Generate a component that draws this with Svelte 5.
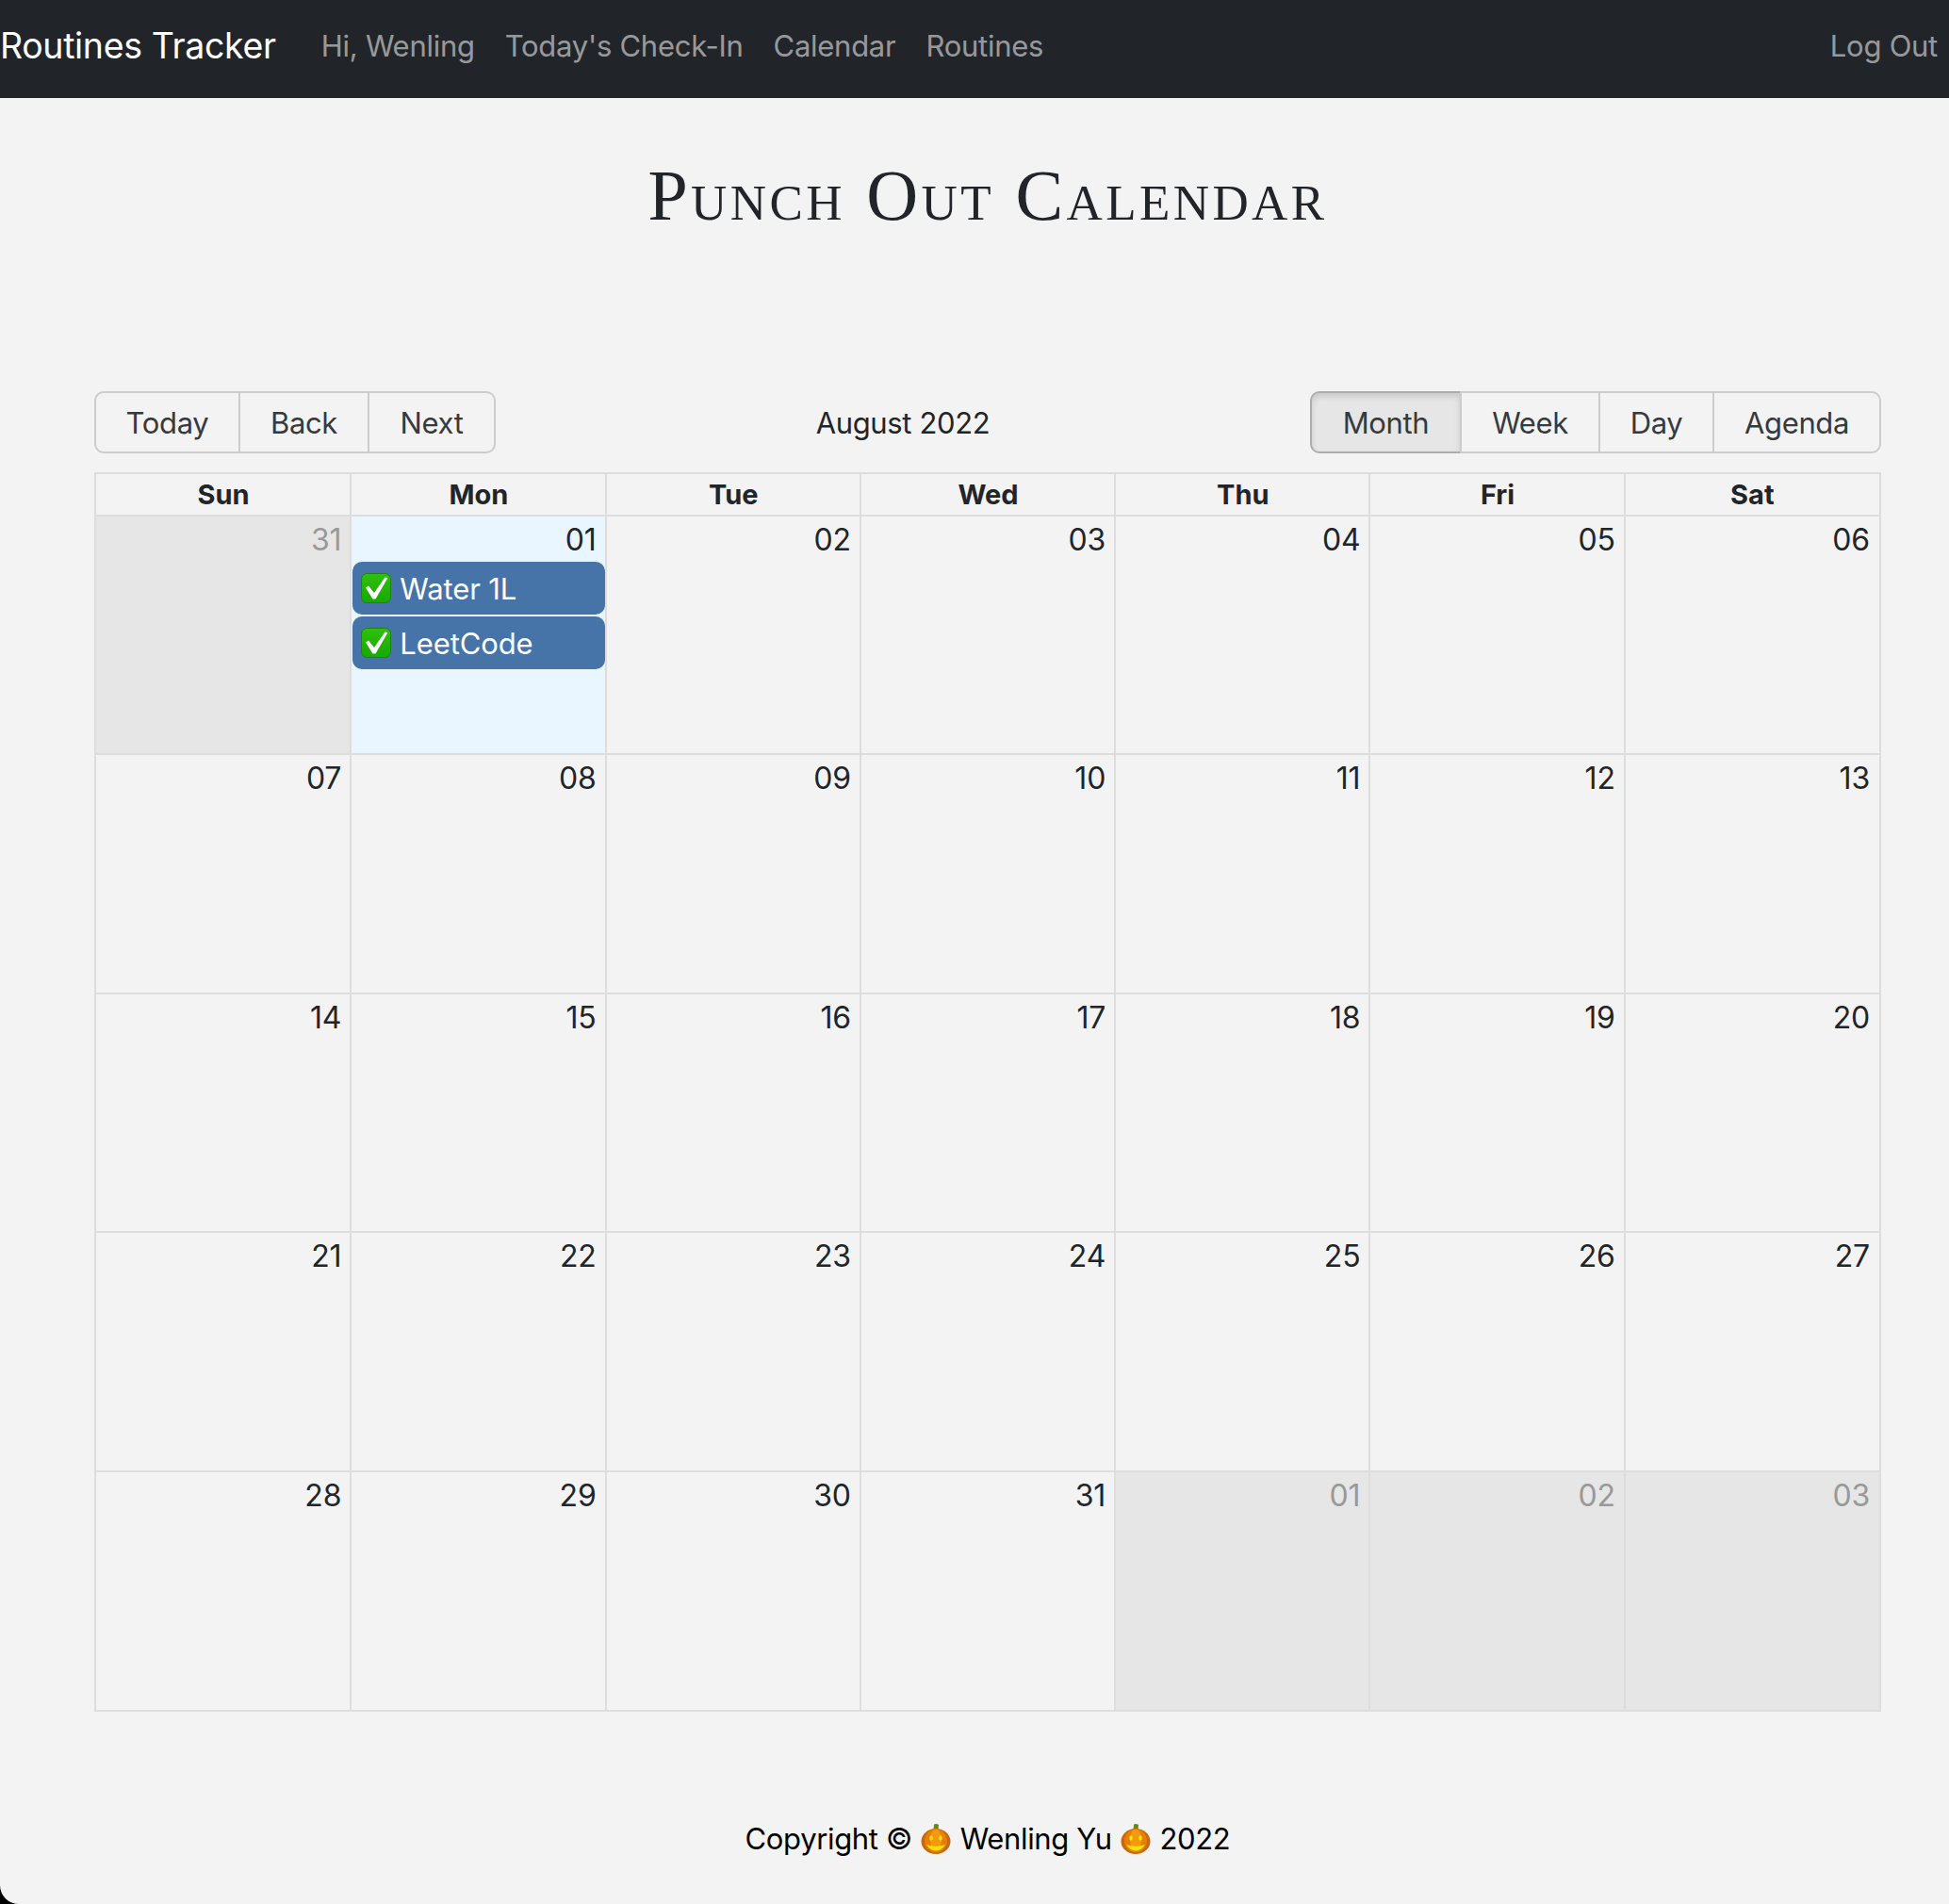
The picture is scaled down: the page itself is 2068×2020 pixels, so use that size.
<script>
  const dayNames = ['Sun', 'Mon', 'Tue', 'Wed', 'Thu', 'Fri', 'Sat']
  const pad = (n) => String(n).padStart(2, '0')

  // 5 weeks, starts on Jul 31
  const weeks = []
  for (let w = 0; w < 5; w++) {
    const days = []
    for (let d = 0; d < 7; d++) {
      const n = w * 7 + d
      let label, off = false
      if (n === 0) {
        label = '31'
        off = true
      } else if (n > 31) {
        label = pad(n - 31)
        off = true
      } else {
        label = pad(n)
      }
      days.push({ label, off, today: n === 1 })
    }
    weeks.push(days)
  }
  const events = ['Water 1L', 'LeetCode']
</script>

{#snippet check()}
  <svg class="check" viewBox="0 0 32 32" aria-hidden="true">
    <defs>
      <linearGradient id="chk" x1="0" y1="0" x2="0" y2="1">
        <stop offset="0" stop-color="#2fc10a" />
        <stop offset="1" stop-color="#18a800" />
      </linearGradient>
    </defs>
    <rect x="0.5" y="0.5" width="31" height="31" rx="6" fill="url(#chk)" stroke="#17870f" />
    <path d="M5 15.5 L8 13.5 L14 21 L25.5 4.5 L28.5 5 L15.5 27.5 L12.5 27.5 Z" fill="#fff" />
  </svg>
{/snippet}

{#snippet pumpkin()}
  <svg class="pumpkin" viewBox="0 0 32 32" aria-hidden="true">
    <path d="M13.5 6 L14 1 Q14 0 16 0 Q19 0 19 1.5 L18.5 6 Z" fill="#5f8f10" />
    <ellipse cx="16" cy="18.5" rx="15.5" ry="13.5" fill="#c9680a" />
    <ellipse cx="16" cy="18" rx="12" ry="12.5" fill="#e67f08" />
    <ellipse cx="16" cy="17" rx="6" ry="11.5" fill="#f19a10" />
    <ellipse cx="11" cy="15" rx="1.8" ry="2.8" fill="#fbe00a" />
    <ellipse cx="21" cy="15" rx="1.8" ry="2.8" fill="#fbe00a" />
    <path d="M6 22 Q16 25.5 26 22 Q22 28.5 16 28.5 Q10 28.5 6 22 Z" fill="#f6e00a" />
  </svg>
{/snippet}

<nav class="navbar">
  <a class="brand" href="#top">Routines Tracker</a>
  <a class="nav-link" href="#top">Hi, Wenling</a>
  <a class="nav-link" href="#top">Today's Check-In</a>
  <a class="nav-link" href="#top">Calendar</a>
  <a class="nav-link" href="#top">Routines</a>
  <a class="nav-link logout" href="#top">Log Out</a>
</nav>

<main>
  <h1>Punch Out Calendar</h1>

  <div class="toolbar">
    <div class="btn-group">
      <button class="w-today">Today</button>
      <button class="w-back">Back</button>
      <button class="w-next">Next</button>
    </div>
    <span class="label">August 2022</span>
    <div class="btn-group">
      <button class="active w-month">Month</button>
      <button class="w-week">Week</button>
      <button class="w-day">Day</button>
      <button class="w-agenda">Agenda</button>
    </div>
  </div>

  <div class="calendar">
    <div class="head">
      {#each dayNames as name}
        <div class="head-cell">{name}</div>
      {/each}
    </div>
    {#each weeks as week}
      <div class="week">
        {#each week as day}
          <div class="day" class:off={day.off} class:today={day.today}>
            <div class="date">{day.label}</div>
            {#if day.today}
              {#each events as ev}
                <div class="event">{@render check()}<span>{ev}</span></div>
              {/each}
            {/if}
          </div>
        {/each}
      </div>
    {/each}
  </div>

  <footer>
    Copyright © {@render pumpkin()} Wenling Yu {@render pumpkin()} 2022
  </footer>
</main>

<div class="corner"></div>

<style>
  :global(body) {
    margin: 0;
    background: #f3f3f3;
    font-family: Inter, "Liberation Sans", sans-serif;
    color: #212529;
    font-size: 31px;
    letter-spacing: -0.35px;
  }

  .navbar {
    display: flex;
    align-items: center;
    height: 104px;
    box-sizing: border-box;
    background: #212529;
    padding: 0 12px 7px 0;
  }
  .brand {
    color: #fff;
    font-size: 37.5px;
    margin-right: 48px;
    text-decoration: none;
  }
  .nav-link {
    color: rgba(255, 255, 255, 0.55);
    margin-right: 32px;
    letter-spacing: -0.27px;
    text-decoration: none;
  }
  .logout {
    margin-left: auto;
    margin-right: 0;
  }

  main {
    padding: 0 72px 0 100px;
  }
  h1 {
    margin: 0;
    padding-top: 61px;
    height: 311px;
    box-sizing: border-box;
    text-align: center;
    font-family: "Liberation Serif", serif;
    font-variant: small-caps;
    font-weight: 400;
    font-size: 76px;
    letter-spacing: 3.4px;
    line-height: 84px;
  }

  .toolbar {
    display: flex;
    align-items: center;
    justify-content: space-between;
    height: 66px;
    margin-bottom: 20px;
  }
  .btn-group {
    display: flex;
    height: 66px;
  }
  button {
    font: inherit;
    letter-spacing: inherit;
    color: #373a3c;
    background: none;
    border: 2px solid #ccc;
    margin: 0 0 0 -2px;
    padding: 0;
  }
  button:first-child {
    margin-left: 0;
    border-radius: 10px 0 0 10px;
  }
  button:last-child {
    border-radius: 0 10px 10px 0;
  }
  .active {
    background: #e6e6e6;
    border-color: #adadad;
    box-shadow: inset 0 4px 6px rgba(0, 0, 0, 0.125);
  }
  .w-today { width: 155px; }
  .w-back { width: 139px; }
  .w-next { width: 136px; }
  .w-month { width: 161px; }
  .w-week { width: 149px; }
  .w-day { width: 123px; }
  .w-agenda { width: 179px; }

  .calendar {
    border: 2px solid #ddd;
    display: flex;
    flex-direction: column;
  }
  .head {
    display: grid;
    grid-template-columns: repeat(7, 1fr);
    height: 43px;
    border-bottom: 2px solid #ddd;
  }
  .head-cell {
    font-size: 29px;
    letter-spacing: 0;
    font-weight: 700;
    text-align: center;
    line-height: 44px;
    border-left: 2px solid #ddd;
    margin-left: -1px;
  }
  .head-cell:first-child {
    border-left: 0;
    margin-left: 0;
  }
  .week {
    display: grid;
    grid-template-columns: repeat(7, 1fr);
    height: 251.4px;
    border-bottom: 2px solid #ddd;
  }
  .week:last-child {
    border-bottom: 0;
    height: 252px;
  }
  .day {
    border-left: 2px solid #ddd;
    margin-left: -1px;
    min-width: 0;
  }
  .day:first-child {
    border-left: 0;
    margin-left: 0;
  }
  .off {
    background: #e6e6e6;
  }
  .off .date {
    color: #999;
  }
  .today {
    background: #eaf6ff;
  }
  .date {
    text-align: right;
    font-size: 32px;
    letter-spacing: -0.2px;
    line-height: 39px;
    padding: 5px 10px 0 0;
    height: 39px;
    margin-bottom: 4px;
  }
  .event {
    display: flex;
    align-items: center;
    height: 56px;
    margin: 0 1px 2px 1px;
    padding: 0 0 0 9px;
    background: #4674a8;
    border-radius: 10px;
    color: #fff;
    letter-spacing: -0.1px;
  }
  .check {
    width: 32px;
    height: 32px;
    margin-right: 9px;
  }

  footer {
    height: 205px;
    box-sizing: border-box;
    padding-top: 114px;
    text-align: center;
    line-height: 42px;
    color: #000;
  }
  .pumpkin {
    width: 32px;
    height: 32px;
    margin: 0 1px;
    vertical-align: -5px;
  }

  .corner {
    position: absolute;
    left: 0;
    top: 2000px;
    width: 20px;
    height: 20px;
    background: #000;
    clip-path: path("M0 0 A20 20 0 0 0 20 20 L0 20 Z");
  }
</style>
